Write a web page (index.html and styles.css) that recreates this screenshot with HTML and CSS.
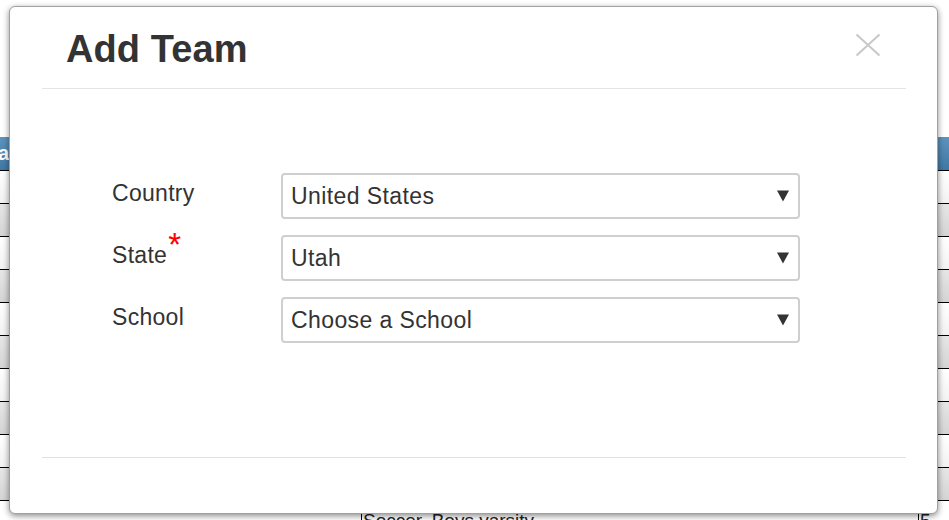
FILE: index.html
```html
<!DOCTYPE html>
<html>
<head>
<meta charset="utf-8">
<link rel="stylesheet" href="styles.css">
</head>
<body>
<div class="page">
  <div class="table">
    <div class="thead"><span class="th-text">a</span></div>
    <div class="row"></div>
    <div class="row alt"></div>
    <div class="row"></div>
    <div class="row alt"></div>
    <div class="row"></div>
    <div class="row alt"></div>
    <div class="row"></div>
    <div class="row alt"></div>
    <div class="row"></div>
    <div class="row alt"></div>
    <div class="row last">
      <div class="cell"></div>
      <div class="cell bl">Soccer, Boys varsity</div>
      <div class="cell bl">5</div>
    </div>
  </div>

  <div class="modal">
    <div class="modal-header">
      <h1 class="title">Add Team</h1>
      <svg class="close" width="26" height="24" viewBox="0 0 26 24">
        <path d="M1.5 1.5 L24.5 22.5 M24.5 1.5 L1.5 22.5" stroke="#c8c8c8" stroke-width="2" fill="none"/>
      </svg>
    </div>
    <div class="modal-body">
      <div class="form">
        <div class="label">Country</div>
        <div class="select"><span>United States</span><svg width="12" height="12" viewBox="0 0 12 12"><path d="M0 0.5 H12 L6 11.5 Z" fill="#333"/></svg></div>
        <div class="label">State<span class="req">*</span></div>
        <div class="select"><span>Utah</span><svg width="12" height="12" viewBox="0 0 12 12"><path d="M0 0.5 H12 L6 11.5 Z" fill="#333"/></svg></div>
        <div class="label">School</div>
        <div class="select"><span>Choose a School</span><svg width="12" height="12" viewBox="0 0 12 12"><path d="M0 0.5 H12 L6 11.5 Z" fill="#333"/></svg></div>
      </div>
    </div>
    <div class="modal-footer"></div>
  </div>
</div>
</body>
</html>
```

FILE: styles.css
```css
html, body {
  margin: 0;
  padding: 0;
  background: #fff;
}
body {
  width: 949px;
  height: 520px;
  overflow: hidden;
  font-family: "Liberation Sans", Arial, sans-serif;
}
.page {
  position: relative;
  width: 949px;
  height: 520px;
}
.table {
  padding-top: 137px;
}
.thead {
  height: 33px;
  border-bottom: 1px solid #000;
  background: linear-gradient(#5e93bd, #3f78a4);
  color: #fff;
  font-weight: bold;
  font-size: 20px;
  line-height: 33px;
}
.th-text {
  margin-left: -2px;
}
.row {
  height: 32px;
  border-bottom: 1px solid #000;
  background: linear-gradient(#ffffff, #f2f2f2);
}
.row.alt {
  background: linear-gradient(#e6e6e6, #d4d4d4);
}
.row.last {
  display: grid;
  grid-template-columns: 361px 557px 1fr;
  border-bottom: none;
  background: #fff;
  font-size: 19px;
  color: #222;
}
.cell {
  padding-top: 10px;
  line-height: 20px;
}
.cell.bl {
  border-left: 1px solid #000;
  padding-left: 1px;
}

.modal {
  position: absolute;
  left: 9px;
  top: 6px;
  width: 929px;
  height: 508px;
  box-sizing: border-box;
  background: #fff;
  border: 1px solid #a0a0a0;
  border-radius: 6px;
  box-shadow: 0 2px 6px rgba(0, 0, 0, 0.45);
  padding: 0 31px 0 32px;
  display: flex;
  flex-direction: column;
}
.modal-header {
  height: 81px;
  border-bottom: 1px solid #e5e5e5;
  display: flex;
  justify-content: space-between;
  align-items: flex-start;
  padding: 0 25px 0 24px;
}
.title {
  margin: 20px 0 0 0;
  font-size: 38px;
  line-height: 44px;
  font-weight: bold;
  color: #333;
  letter-spacing: 0.1px;
}
.close {
  margin-top: 26px;
}
.modal-body {
  height: 369px;
  box-sizing: border-box;
  padding: 84px 0 0 70px;
  border-bottom: 1px solid #e0e0e0;
}
.form {
  display: grid;
  grid-template-columns: 169px 519px;
  grid-auto-rows: 46px;
  row-gap: 16px;
}
.label {
  font-size: 23px;
  line-height: 40px;
  color: #333;
  letter-spacing: 0.3px;
}
.req {
  color: #f00;
  font-size: 33px;
  line-height: 0;
  position: relative;
  top: -7px;
  margin-left: 1px;
}
.select {
  box-sizing: border-box;
  height: 46px;
  border: 2px solid #cfcfcf;
  border-radius: 4px;
  display: flex;
  align-items: center;
  justify-content: space-between;
  padding: 0 9px 0 8px;
  font-size: 23px;
  color: #333;
  letter-spacing: 0.4px;
}
.modal-footer {
  flex: 1;
}
```
